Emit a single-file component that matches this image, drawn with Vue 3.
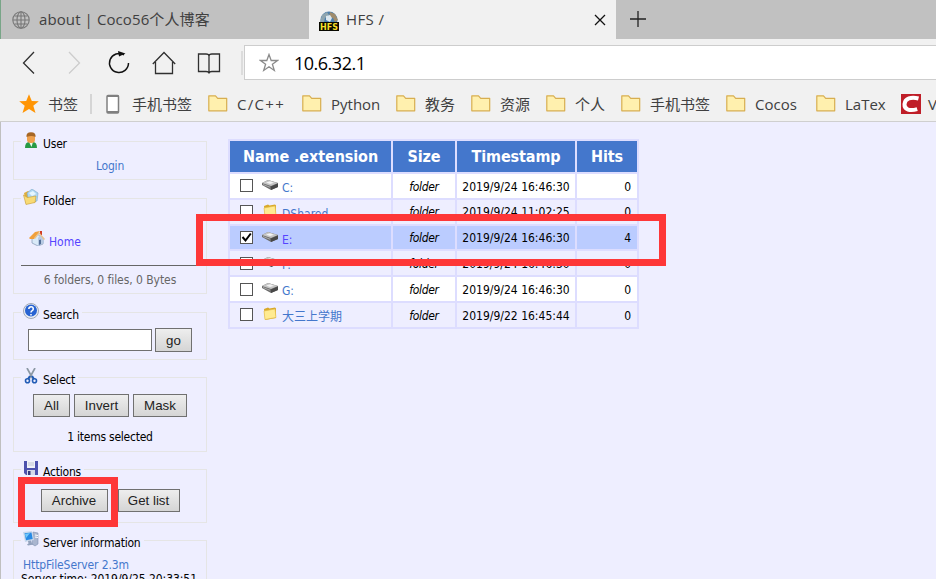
<template>
  <div class="browser">
    <div class="tab-bar">
      <div class="tab">
        <svg class="globe" viewBox="0 0 18 18">
          <circle cx="9" cy="9" r="8.2" />
          <ellipse cx="9" cy="9" rx="4" ry="8.2" />
          <path d="M9 1v16M1 9h16M2.500 5h13M2.500 13h13" />
        </svg>
        <span class="tab-title about">about | Coco56个人博客</span>
      </div>
      <div class="tab active">
        <svg class="hfs-icon" viewBox="0 0 20 20">
          <circle cx="10" cy="9" r="8.500" fill="#4b7fae" />
          <path d="M3 4l5-3 2 3-4 3-1 4-4 0z" fill="#8fa5af" />
          <path d="M11 1l5 2 3 6-3 2-2-4-4-1z" fill="#a08c6c" />
          <path d="M7 5l4-1 2 3-2 4-4-2z" fill="#dbe7ef" />
          <rect y="11" width="20" height="9" fill="#080800" />
          <text x="10" y="18.700" text-anchor="middle" textLength="18">HFS</text>
        </svg>
        <span class="tab-title">HFS /</span>
        <svg class="close" viewBox="0 0 12 12"><path d="M1 1l10 10M11 1L1 11" /></svg>
      </div>
      <svg class="plus" viewBox="0 0 16 16"><path d="M8 0v16M0 8h16" /></svg>
    </div>

    <div class="nav-bar">
      <div class="nav-icons">
        <svg viewBox="0 0 24 24"><path d="M17 1L6.500 12 17 22.500" /></svg>
        <svg class="disabled" viewBox="0 0 24 24"><path d="M7 1l10.500 11L7 22.500" /></svg>
        <svg class="reload" viewBox="0 0 24 24">
          <path d="M17 3.900A9.500 9.500 0 1 0 21.500 12M12 2.700h4" />
          <path d="M11 0l7.500 2.500-6.500 3z" class="arrow" />
        </svg>
        <svg viewBox="0 0 24 24"><path d="M.8 13L12 1.500 23.200 13M3.500 11v11.500h17V11" /></svg>
        <svg viewBox="0 0 24 24"><path d="M1.500 3H9q3 0 3 2 0-2 3-2h7.500v17.500H15q-3 0-3 2 0-2-3-2H1.500zM12 5v17" /></svg>
      </div>
      <div class="address">
        <svg viewBox="0 0 20 20"><path d="M10 1.500l2.200 6h6.300l-5.100 3.800 1.900 6.200-5.300-3.700-5.300 3.700 1.900-6.200-5.100-3.800h6.300z" /></svg>
        <span>10.6.32.1</span>
      </div>
    </div>

    <div class="bookmarks">
      <div v-for="(b, i) in bookmarks" :key="i" class="bookmark" :class="b.icon">
        <svg v-if="b.icon === 'star'" viewBox="0 0 20 20">
          <path d="M10 .3l2.800 6.700 7 .2-5.500 4.500 2.200 7.300L10 14.900 3.500 19l2.200-7.300L.2 7.200l7-.2z" fill="#ff9505" />
        </svg>
        <svg v-else-if="b.icon === 'phone'" viewBox="0 0 20 20">
          <rect x="1" y="1.500" width="11.500" height="17.500" rx="1" fill="#fff" stroke="#808080" stroke-width="1.500" />
          <path d="M1 2h11.500M1 18h11.500" stroke="#808080" stroke-width="2" />
        </svg>
        <svg v-else-if="b.icon === 'csdn'" viewBox="0 0 20 20">
          <rect width="20" height="20" fill="#bf1e28" />
          <path d="M17.500 4.500C10 2.500 4 4.500 3.500 10.200c-.3 5.600 5.500 7 12.700 4.900" fill="none" stroke="#fff" stroke-width="4" />
        </svg>
        <svg v-else viewBox="0 0 20 20">
          <path d="M.8 1.800h6.700l2.200 2.500h9v12.500H.8z" fill="#fff0ae" stroke="#d8ae50" stroke-width="1.200" stroke-linejoin="round" />
        </svg>
        <span :class="{ wide: b.wide }">{{ b.text }}</span>
      </div>
    </div>

    <div class="page">
      <aside class="sidebar">
        <section class="panel user">
          <h4>
            <svg viewBox="0 0 16 16">
              <path d="M2 16q0-6 4-6h4q4 0 4 6z" fill="#279a45" />
              <path d="M6 10h4l-1.500 5z" fill="#eafbea" />
              <rect x="4" y="2" width="8" height="9" rx="3.500" fill="#efa04c" />
              <path d="M3.500 5Q2.800.3 8 .3t4.500 4.700q-4-2-9 0z" fill="#a66625" />
            </svg>
            <span>User</span>
          </h4>
          <a>Login</a>
        </section>

        <section class="panel folder">
          <h4>
            <svg viewBox="0 0 16 16">
              <path d="M1 4l4-2 2 1 6 1v9L3 15z" fill="#dfae3c" />
              <path d="M4 4l5-4 6 4-1 8-8 1z" fill="#afd7f3" stroke="#7ea9c7" stroke-width=".6" />
              <path d="M6 4l4-2 3 3-4 2z" fill="#e5f6ff" />
              <path d="M.5 6l4 2.500L13 7l-1 6.500-9 2z" fill="#f8da75" stroke="#c89d34" stroke-width=".6" />
            </svg>
            <span>Folder</span>
          </h4>
          <div class="home">
            <svg viewBox="0 0 16 16">
              <path d="M11 1h2v4h-2z" fill="#d13c24" />
              <path d="M3 7l5-3 6 4v6l-5 2-6-3z" fill="#d9eaf8" stroke="#8297b5" stroke-width=".7" />
              <path d="M9 16V8l2-3 4 5v3z" fill="#b8cae3" />
              <path d="M0 8l6-6 5-1-6 8H1z" fill="#f1a13c" />
              <path d="M10 2l6 7-1 1-5-6-4 5-1-1z" fill="#e9c28b" />
              <path d="M10 10l2-.5V14l-2 1z" fill="#536f98" />
            </svg>
            <span>Home</span>
          </div>
          <div class="totals">6 folders, 0 files, 0 Bytes</div>
        </section>

        <section class="panel search">
          <h4>
            <svg viewBox="0 0 16 16">
              <circle cx="8" cy="8" r="7.500" fill="#e8edf5" stroke="#a1a8b6" />
              <circle cx="8" cy="7.500" r="6" fill="#2863d2" />
              <path d="M5.800 6q.2-2.200 2.300-2.200T10.300 6q0 1-1.100 1.700Q8 8.400 8 9.500M8 11v1.400" fill="none" stroke="#fff" stroke-width="1.500" />
            </svg>
            <span>Search</span>
          </h4>
          <div class="controls">
            <input type="text" />
            <button class="go">go</button>
          </div>
        </section>

        <section class="panel select">
          <h4>
            <svg viewBox="0 0 16 16">
              <path d="M4 0l6 11M12 0L6 11" stroke="#8c98a4" stroke-width="1.700" />
              <path d="M7 8l-2 3M9 8l2 3" stroke="#205bb5" stroke-width="2" />
              <circle cx="4.500" cy="12.700" r="2" fill="none" stroke="#205bb5" stroke-width="1.600" />
              <circle cx="11.500" cy="12.700" r="2" fill="none" stroke="#205bb5" stroke-width="1.600" />
            </svg>
            <span>Select</span>
          </h4>
          <div class="controls">
            <button class="all">All</button>
            <button class="invert">Invert</button>
            <button class="mask">Mask</button>
          </div>
          <p>1 items selected</p>
        </section>

        <section class="panel actions">
          <h4>
            <svg viewBox="0 0 16 16">
              <path d="M1 1h14v14H3l-2-2z" fill="#4d52ad" />
              <path d="M4 1h8v7H4z" fill="#f1f3f8" />
              <path d="M5 3h6M5 5h6" stroke="#c0c5d3" />
              <path d="M4 10h8v5H4z" fill="#d5d8e8" />
              <path d="M5 11h2.500v4H5z" fill="#353b80" />
            </svg>
            <span>Actions</span>
          </h4>
          <div class="controls">
            <button class="archive">Archive</button>
            <button class="get-list">Get list</button>
          </div>
        </section>

        <section class="panel server">
          <h4>
            <svg viewBox="0 0 16 16">
              <path d="M10 1l5 1v11l-3 2-3-2z" fill="#aab6cf" stroke="#8091b2" stroke-width=".6" />
              <path d="M12 4l3 .5M12 6l3 .5" stroke="#fff" />
              <path d="M0 1l9-1 2 9-9 2z" fill="#c9d8eb" />
              <path d="M1.500 2.300L8.500 1.500 9.700 8 3 9.200z" fill="#278ae5" />
              <path d="M2 3l5-1-4 5z" fill="#74c8fa" />
              <path d="M5 10l3-.5 1 3 2 1-6 1-1-1 1.500-1z" fill="#93a2bd" />
            </svg>
            <span>Server information</span>
          </h4>
          <a>HttpFileServer 2.3m</a>
          <div class="time">Server time: 2019/9/25 20:33:51</div>
        </section>
      </aside>

      <div class="files">
        <div class="row head">
          <div>Name .extension</div>
          <div>Size</div>
          <div>Timestamp</div>
          <div>Hits</div>
        </div>
        <div v-for="f in files" :key="f.name" class="row" :class="{ selected: f.selected }">
          <div class="name">
            <span class="check">
              <svg v-if="f.selected" viewBox="0 0 11 11"><path d="M1.500 5l3 3.500L9.800 1.500" /></svg>
            </span>
            <svg v-if="f.drive" class="file-icon" viewBox="0 0 16 16">
              <path d="M0 6l6-3 10 3v4l-7 3L0 8z" fill="#6b6b6b" />
              <path d="M0 6l6-3 10 3-7 3z" fill="#c5c5c5" />
              <path d="M4 5.500l4-1.300 4 1.600-4 1.200z" fill="#f3f3f3" />
              <path d="M9 9.500l7-3V10l-7 3z" fill="#484848" />
              <path d="M1 7.500l7 2.700" stroke="#aaa" />
            </svg>
            <svg v-else class="file-icon" viewBox="0 0 16 16">
              <path d="M2 3l4-1.500 1.500 1L13 1.500l1 1V12L3 14z" fill="#d9a928" />
              <path d="M2 5l11-2 1 8.500-11 2z" fill="#ffeb91" stroke="#e2bc4d" stroke-width=".6" />
            </svg>
            <span class="file-name">{{ f.name }}</span>
          </div>
          <div class="size">folder</div>
          <div class="stamp">{{ f.time }}</div>
          <div class="hits">{{ f.hits }}</div>
        </div>
      </div>

      <div class="mark mark-row"></div>
      <div class="mark mark-archive"></div>
    </div>
  </div>
</template>

<script setup>
import { ref } from 'vue';

const bookmarks = ref([
  { icon: 'star', text: '书签' },
  { icon: 'phone', text: '手机书签' },
  { icon: 'dir', text: 'C/C++', wide: true },
  { icon: 'dir', text: 'Python' },
  { icon: 'dir', text: '教务' },
  { icon: 'dir', text: '资源' },
  { icon: 'dir', text: '个人' },
  { icon: 'dir', text: '手机书签' },
  { icon: 'dir', text: 'Cocos' },
  { icon: 'dir', text: 'LaTex' },
  { icon: 'csdn', text: 'V' }
]);

const files = ref([
  { name: 'C:', drive: true, time: '2019/9/24 16:46:30', hits: 0 },
  { name: 'DShared', drive: false, time: '2019/9/24 11:02:25', hits: 0 },
  { name: 'E:', drive: true, time: '2019/9/24 16:46:30', hits: 4, selected: true },
  { name: 'F:', drive: true, time: '2019/9/24 16:46:30', hits: 0 },
  { name: 'G:', drive: true, time: '2019/9/24 16:46:30', hits: 0 },
  { name: '大三上学期', drive: false, time: '2019/9/22 16:45:44', hits: 0 }
]);
</script>

<style>
body {
  margin: 0;
  overflow: hidden;
}
</style>

<style scoped>
.browser {
  width: 936px;
  height: 579px;
  overflow: hidden;
  display: flex;
  flex-direction: column;
  background: #f1f1f1;
  font-family: "Open Sans", "Noto Sans CJK SC", sans-serif;
  color: #404040;
}

.browser * {
  box-sizing: border-box;
}

svg {
  display: block;
  flex: none;
}

/* Tabs */
.tab-bar {
  height: 39px;
  flex: none;
  display: flex;
  align-items: center;
  background: #c1c1c1;
  border-left: 1px solid #78a587;
}

.tab {
  width: 308px;
  height: 39px;
  display: flex;
  align-items: center;
  padding-left: 11px;
}

.tab.active {
  width: 307px;
  padding: 0 10px;
  background: #f1f1f1;
}

.tab-title {
  margin: -1px 0 0 9px;
  font-size: 15px;
  line-height: 20px;
  white-space: nowrap;
}

.about {
  letter-spacing: 0.1px;
}

.active .tab-title {
  margin-left: 7px;
  letter-spacing: 0.4px;
}

.globe {
  width: 18px;
  height: 18px;
  fill: none;
  stroke: #777;
  stroke-width: 1.1;
}

.hfs-icon {
  width: 20px;
  height: 20px;
  margin-top: 2px;
}

.hfs-icon text {
  font: bold 8px "DejaVu Sans", sans-serif;
  fill: #f5df29;
}

.close {
  width: 12px;
  height: 12px;
  margin-left: auto;
  stroke: #111;
  stroke-width: 1.3;
}

.plus {
  width: 16px;
  height: 16px;
  margin: -2px 0 0 14px;
  stroke: #222;
  stroke-width: 1.3;
}

/* Navigation */
.nav-bar {
  height: 47px;
  flex: none;
  display: flex;
  align-items: center;
}

.nav-icons {
  width: 243px;
  flex: none;
  display: flex;
  gap: 21px;
  padding-left: 17px;
  border-right: 2px solid #dcdcdc;
}

.nav-icons svg {
  width: 24px;
  height: 24px;
  fill: none;
  stroke: #303030;
  stroke-width: 1.3;
}

.nav-icons .disabled {
  stroke: #cdcdcd;
}

.nav-icons .reload {
  stroke: #111;
  stroke-width: 1.5;
}

.nav-icons .arrow {
  fill: #111;
  stroke: none;
}

.address {
  flex: 1;
  height: 35px;
  margin-left: 1px;
  display: flex;
  align-items: center;
  gap: 15px;
  padding-left: 14px;
  background: #fff;
  border: 1px solid #cdcdcd;
  border-right: none;
  color: #000;
  font-size: 18px;
  letter-spacing: -0.5px;
}

.address svg {
  width: 20px;
  height: 20px;
  fill: none;
  stroke: #8b8b8b;
  stroke-width: 1.3;
}

/* Bookmarks */
.bookmarks {
  height: 36px;
  flex: none;
  display: grid;
  grid-template-columns: 87px 102px 94px 94px 75px 75px 75px 105px 90px 85px 50px;
  align-items: center;
  padding-left: 19px;
  border-bottom: 1px solid #cfcfcf;
}

.bookmark {
  display: flex;
  align-items: center;
  gap: 9px;
  font-size: 15px;
  line-height: 20px;
  white-space: nowrap;
}

.bookmark svg {
  width: 20px;
  height: 20px;
}

.bookmark .wide {
  letter-spacing: 1.3px;
}

.bookmark.star {
  width: 73px;
  border-right: 2px solid #d5d5d5;
}

.bookmark.phone svg {
  margin-right: -3px;
}

.bookmark.csdn {
  gap: 7px;
}

/* Page */
.page {
  position: relative;
  flex: 1;
  min-height: 0;
  display: flex;
  align-items: flex-start;
  background: #eef;
  border-left: 1px solid #c0c0c0;
  font-family: "DejaVu Sans Condensed", "Noto Sans CJK SC", sans-serif;
  font-size: 12px;
  color: #000;
}

.sidebar {
  width: 194px;
  flex: none;
  display: flex;
  flex-direction: column;
  margin: 19px 0 0 12px;
  letter-spacing: -0.2px;
}

.panel {
  border: 1px solid #e5e5e5;
  margin-bottom: 18px;
  display: flex;
  flex-direction: column;
  align-items: center;
  line-height: 14px;
  white-space: nowrap;
}

.panel h4 {
  align-self: flex-start;
  height: 20px;
  margin: -11px 0 0 7px;
  padding: 0 3px 0 2px;
  display: flex;
  align-items: flex-start;
  gap: 4px;
  background: #eef;
  font-size: 12px;
  font-weight: normal;
}

.panel h4 svg {
  width: 16px;
  height: 16px;
  margin-top: 1px;
}

.panel h4 span {
  padding-top: 6px;
}

.panel a {
  color: #47c;
}

.user {
  height: 39px;
}

.user a {
  margin-top: 8px;
}

.folder {
  height: 96px;
}

.home {
  align-self: flex-start;
  display: flex;
  gap: 4px;
  margin: 22px 0 0 15px;
  color: #54f;
}

.home svg {
  width: 16px;
  height: 16px;
}

.home span {
  padding-top: 5px;
  letter-spacing: 0;
}

.totals {
  width: 178px;
  margin-top: 16px;
  padding-top: 7px;
  border-top: 1px solid #666;
  color: #666;
  letter-spacing: -0.05px;
  text-align: center;
}

.search {
  height: 48px;
  margin-bottom: 17px;
}

.controls {
  display: flex;
  align-items: center;
  justify-content: center;
}

.search .controls {
  gap: 3px;
  margin-top: 6px;
}

.search input {
  width: 124px;
  height: 22px;
  padding: 0;
  border: 1px solid #707070;
  background: #fff;
}

button {
  height: 23px;
  padding: 0;
  border: 1px solid #707070;
  background: linear-gradient(#eee, #d5d5d5);
  color: #222;
  font: 13.300px "Liberation Sans", sans-serif;
}

.go {
  width: 37px;
  height: 24px;
}

.select {
  height: 75px;
  margin-bottom: 17px;
}

.select .controls {
  gap: 4px;
  margin-top: 7px;
}

.all {
  width: 37px;
}

.invert {
  width: 55px;
}

.mask {
  width: 54px;
}

.select p {
  margin: 13px 0 0;
  letter-spacing: -0.25px;
}

.actions {
  height: 54px;
  margin-bottom: 17px;
}

.actions .controls {
  gap: 10px;
  margin-top: 10px;
}

.archive {
  width: 67px;
}

.get-list {
  width: 62px;
}

.server {
  height: 60px;
  align-items: flex-start;
}

.server a {
  margin: 8px 0 0 9px;
  letter-spacing: -0.1px;
}

.server .time {
  margin-left: 7px;
  letter-spacing: -0.05px;
}

/* File list */
.files {
  margin: 17px 0 0 21px;
  padding: 2px;
  display: flex;
  flex-direction: column;
  gap: 2px;
  background: #ddf;
}

.row {
  height: 24px;
  display: grid;
  grid-template-columns: 161px 62px 118px 60px;
  grid-template-rows: 100%;
  gap: 2px;
  line-height: 24px;
}

.row > div {
  background: #eef;
  white-space: nowrap;
}

.row:nth-child(even) > div {
  background: #fff;
}

.row:nth-child(5) > div {
  background: #eef;
}

.row:nth-child(n + 5),
.row:nth-child(2) {
  line-height: 26px;
}

.row.selected {
  height: 23px;
}

.row.selected > div {
  background: #bcf;
}

.row.head {
  height: 31px;
  line-height: 32px;
}

.row.head > div {
  background: #47c;
  color: #fff;
  font-size: 16px;
  letter-spacing: -0.1px;
  font-weight: bold;
  text-align: center;
}

.name {
  display: flex;
  align-items: flex-start;
  padding-left: 10px;
}

.check {
  width: 13px;
  height: 13px;
  margin-top: 5px;
  border: 1px solid #555;
  background: #fff;
}

.row:nth-child(5) .check,
.row:nth-child(6) .check {
  margin-top: 6px;
}

.check svg {
  width: 11px;
  height: 11px;
  fill: none;
  stroke: #000;
  stroke-width: 2;
}

.file-icon {
  width: 16px;
  height: 16px;
  margin: 3px 4px 0 9px;
}

.file-name {
  margin-top: 2px;
  line-height: 24px;
  color: #47c;
}

.selected .file-name {
  color: #54f;
}

.size {
  text-align: center;
  font-style: italic;
  letter-spacing: -0.3px;
}

.stamp {
  text-align: center;
}

.hits {
  padding-right: 6px;
  text-align: right;
}

/* Highlight frames lying over the page */
.mark {
  position: absolute;
  border: 7px solid #fe3738;
}

.mark-row {
  left: 195px;
  top: 92px;
  width: 470px;
  height: 52px;
}

.mark-archive {
  left: 17px;
  top: 355px;
  width: 100px;
  height: 50px;
}
</style>
